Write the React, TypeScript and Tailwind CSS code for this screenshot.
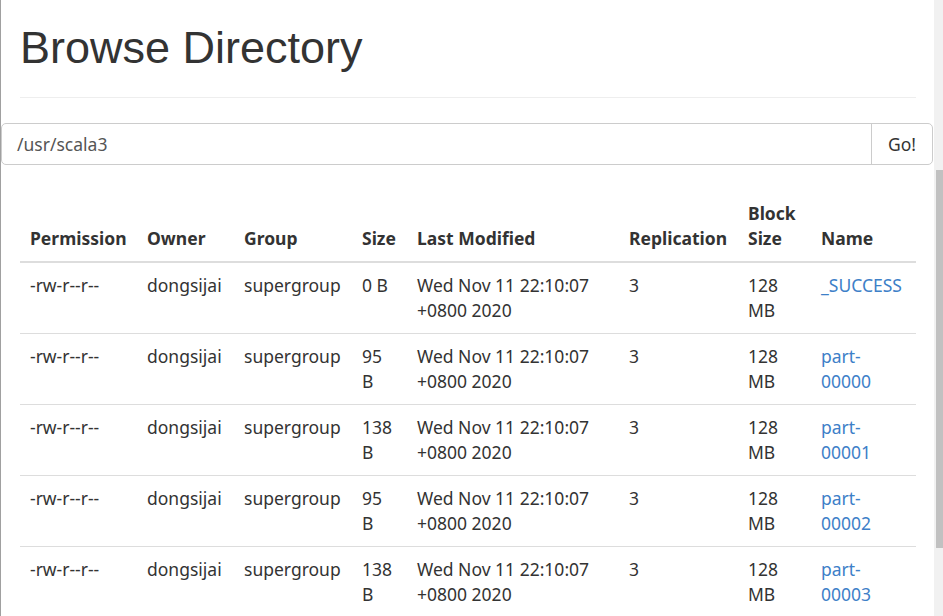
const columns = [
  { label: ["Permission"], width: "w-[117px]" },
  { label: ["Owner"], width: "w-[97px]" },
  { label: ["Group"], width: "w-[118px]" },
  { label: ["Size"], width: "w-[55px]" },
  { label: ["Last Modified"], width: "w-[212px]" },
  { label: ["Replication"], width: "w-[119px]" },
  { label: ["Block", "Size"], width: "w-[73px]" },
  { label: ["Name"], width: "w-[105px]" },
];

const files = [
  { size: ["0 B"], name: ["_SUCCESS"] },
  { size: ["95", "B"], name: ["part-", "00000"] },
  { size: ["138", "B"], name: ["part-", "00001"] },
  { size: ["95", "B"], name: ["part-", "00002"] },
  { size: ["138", "B"], name: ["part-", "00003"] },
];

function Lines({ lines }: { lines: string[] }) {
  return (
    <>
      {lines.map((l, i) => (
        <span key={i} className="block whitespace-nowrap">
          {l}
        </span>
      ))}
    </>
  );
}

export default function App() {
  return (
    <div className="flex h-[616px] w-[943px] overflow-hidden bg-white text-[#333] font-['Noto_Sans',sans-serif] text-[17.5px] leading-[25px]">
      <div className="w-[934px] shrink-0 border-l border-[#a0a0a0]">
        <div className="ml-[19px] w-[896px]">
          <div className="border-b border-[#eee] pt-[23px] pb-[24px]">
            <h1 className="font-['Liberation_Sans',Arial,sans-serif] text-[45px] leading-[50px] font-normal">
              Browse Directory
            </h1>
          </div>
        </div>

        <div className="mr-[1px] mt-[25px] flex h-[42px] rounded-[5px] border border-[#ccc]">
          <div className="flex flex-1 items-center px-[15px] text-[#555]">
            /usr/scala3
          </div>
          <button className="w-[61px] border-l border-[#ccc] text-center">
            Go!
          </button>
        </div>

        <table className="ml-[19px] mt-[26px] w-[896px] table-fixed border-collapse">
          <colgroup>
            {columns.map((c, i) => (
              <col key={i} className={c.width} />
            ))}
          </colgroup>
          <thead>
            <tr>
              {columns.map((c, i) => (
                <th
                  key={i}
                  className="border-b-2 border-[#ddd] p-[10px] text-left align-bottom font-bold"
                >
                  <Lines lines={c.label} />
                </th>
              ))}
            </tr>
          </thead>
          <tbody>
            {files.map((f, i) => (
              <tr key={i} className={i > 0 ? "border-t border-[#ddd]" : ""}>
                <td className="p-[10px] align-top whitespace-nowrap">-rw-r--r--</td>
                <td className="p-[10px] align-top">dongsijai</td>
                <td className="p-[10px] align-top">supergroup</td>
                <td className="p-[10px] align-top">
                  <Lines lines={f.size} />
                </td>
                <td className="p-[10px] align-top">
                  <Lines lines={["Wed Nov 11 22:10:07", "+0800 2020"]} />
                </td>
                <td className="p-[10px] align-top">3</td>
                <td className="p-[10px] align-top">
                  <Lines lines={["128", "MB"]} />
                </td>
                <td className="p-[10px] align-top">
                  <a href="#" className="text-[#3d80c8]">
                    <Lines lines={f.name} />
                  </a>
                </td>
              </tr>
            ))}
          </tbody>
        </table>
      </div>

      <div className="flex w-[9px] shrink-0 flex-col bg-[#f1f1f1]">
        <div className="h-[170px] shrink-0" />
        <div className="ml-[2px] h-[378px] shrink-0 bg-[#c1c1c1]" />
      </div>
    </div>
  );
}
